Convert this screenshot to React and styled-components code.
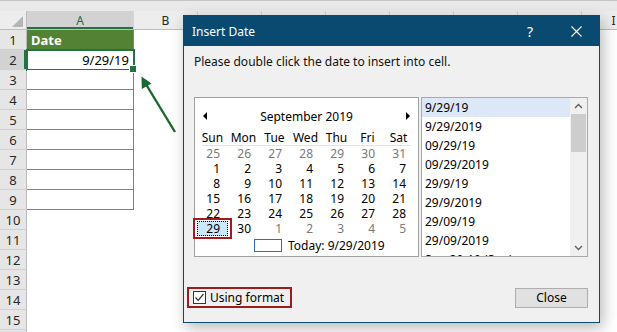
import styled, { createGlobalStyle } from "styled-components";

const GlobalStyle = createGlobalStyle`
  html, body {
    margin: 0;
    padding: 0;
    background: #fff;
  }
  body {
    font-family: "Noto Sans", "DejaVu Sans", sans-serif;
    overflow: hidden;
  }
  * {
    box-sizing: border-box;
  }
`;

const Screen = styled.div`
  position: relative;
  width: 617px;
  height: 332px;
  overflow: hidden;
  background: #fff;
`;

/* ---------- spreadsheet ---------- */

const Sheet = styled.div`
  display: flex;
  flex-direction: column;
`;

const FormulaEdge = styled.div`
  height: 11px;
  background: #e9e9e9;
  border-top: 1px solid #c6c6c6;
`;

const HeaderRow = styled.div`
  display: flex;
  height: 19px;
  background: #ededed;
  border-bottom: 1px solid #bdbdbd;
`;

const Corner = styled.div`
  position: relative;
  flex: 0 0 27px;
  border-right: 1px solid #bdbdbd;
  &::after {
    content: "";
    position: absolute;
    right: 3px;
    bottom: 2px;
    border-left: 11px solid transparent;
    border-bottom: 11px solid #b5b5b5;
  }
`;

const ColHead = styled.div`
  flex: 0 0 ${(p) => p.$w}px;
  display: flex;
  align-items: center;
  justify-content: center;
  border-right: 1px solid #d4d4d4;
  font-size: 12px;
  color: ${(p) => (p.$active ? "#1d6b3e" : "#262626")};
  background: ${(p) => (p.$active ? "#d2d2d2" : "transparent")};
  box-shadow: ${(p) => (p.$active ? "inset 0 -2px 0 #217346" : "none")};
`;

const SheetRow = styled.div`
  display: flex;
  height: 20px;
`;

const RowHead = styled.div`
  flex: 0 0 27px;
  display: flex;
  align-items: center;
  justify-content: center;
  font-size: 13px;
  color: #262626;
  background: ${(p) => (p.$active ? "#d2d2d2" : "#e6e6e6")};
  border-right: 1px solid #bdbdbd;
  border-bottom: 1px solid #d0d0d0;
  box-shadow: ${(p) => (p.$active ? "inset -2px 0 0 #217346" : "none")};
`;

const CellA = styled.div`
  position: relative;
  flex: 0 0 107px;
  display: flex;
  align-items: center;
  padding: 0 4px;
  font-size: 13px;
  justify-content: ${(p) => (p.$right ? "flex-end" : "flex-start")};
  font-weight: ${(p) => (p.$head ? 700 : 400)};
  color: ${(p) => (p.$head ? "#fff" : "#000")};
  background: ${(p) => (p.$head ? "#548235" : "#fff")};
  border-right: 1px solid ${(p) => (p.$framed ? "#808080" : "transparent")};
  border-bottom: 1px solid ${(p) => (p.$framed ? "#808080" : "transparent")};

  ${(p) =>
    p.$selected &&
    `
    &::after {
      content: "";
      position: absolute;
      left: -1px;
      top: -1px;
      right: -2px;
      bottom: -2px;
      border: 2px solid #217346;
    }
    &::before {
      content: "";
      position: absolute;
      right: -4px;
      bottom: -4px;
      width: 6px;
      height: 6px;
      background: #217346;
      border: 1px solid #fff;
      z-index: 1;
    }
  `}
`;

const Blank = styled.div`
  flex: 1;
`;

const Pointer = styled.svg`
  position: absolute;
  left: 130px;
  top: 68px;
`;

/* ---------- dialog ---------- */

const Dialog = styled.div`
  position: absolute;
  left: 183px;
  top: 15px;
  width: 417px;
  display: flex;
  flex-direction: column;
  background: #f0f0f0;
  border: 1px solid #0b4a70;
  box-shadow: 3px 5px 14px rgba(0, 0, 0, 0.28);
  font-size: 12px;
  color: #000;
`;

const TitleBar = styled.div`
  display: flex;
  align-items: center;
  height: 30px;
  padding-left: 8px;
  background: #0b4a70;
  color: #fff;
`;

const Title = styled.div`
  flex: 1;
`;

const TitleButton = styled.div`
  width: 46px;
  height: 30px;
  display: flex;
  align-items: center;
  justify-content: center;
  font-size: 14px;
`;

const Body = styled.div`
  display: flex;
  flex-direction: column;
  padding: 8px 11px 14px 10px;
`;

const Prompt = styled.div`
  line-height: 16px;
  margin-bottom: 27px;
  color: #111;
`;

const Panels = styled.div`
  display: flex;
  gap: 2px;
  height: 160px;
`;

const Calendar = styled.div`
  flex: 0 0 225px;
  display: flex;
  flex-direction: column;
  background: #fff;
  border: 1px solid #a0a0a0;
`;

const CalHeader = styled.div`
  display: flex;
  align-items: center;
  justify-content: space-between;
  height: 16px;
  margin-top: 10px;
  padding: 0 8px 0 8px;
`;

const NavArrow = styled.span`
  width: 0;
  height: 0;
  border-top: 4px solid transparent;
  border-bottom: 4px solid transparent;
  ${(p) =>
    p.$dir === "left"
      ? "border-right: 4px solid #000;"
      : "border-left: 4px solid #000;"}
`;

const DayGrid = styled.div`
  display: grid;
  grid-template-columns: repeat(7, 31px);
  grid-auto-rows: 15px;
  margin-left: 2px;
`;

const DayName = styled.div`
  text-align: center;
  line-height: 15px;
`;

const Divider = styled.div`
  height: 1px;
  margin: 0 7px 0 7px;
  background: #e3e3e3;
`;

const DayCell = styled.div`
  position: relative;
  text-align: right;
  padding-right: 8px;
  line-height: 15px;
  color: ${(p) => (p.$muted ? "#7a7a7a" : "#000")};

  ${(p) =>
    p.$picked &&
    `
    background: #cce8ff;
    outline: 1px dotted #000;
    outline-offset: -1px;
    &::after {
      content: "";
      position: absolute;
      left: -4px;
      right: -4px;
      top: -3px;
      bottom: -3px;
      border: 2px solid #a01c1c;
    }
  `}
`;

const TodayRow = styled.div`
  display: flex;
  align-items: center;
  gap: 6px;
  height: 16px;
  margin-top: 1px;
  padding-left: 59px;
`;

const TodayMark = styled.span`
  width: 28px;
  height: 13px;
  border: 1px solid #2f6fb0;
`;

const ListBox = styled.div`
  flex: 1;
  display: flex;
  background: #fff;
  border: 1px solid #a9a9a9;
  overflow: hidden;
`;

const Items = styled.div`
  flex: 1;
  overflow: hidden;
`;

const Item = styled.div`
  height: 19px;
  line-height: 19px;
  padding-left: 3px;
  white-space: nowrap;
  background: ${(p) => (p.$selected ? "#dce7f8" : "transparent")};
`;

const ScrollBar = styled.div`
  flex: 0 0 17px;
  display: flex;
  flex-direction: column;
  background: #f0f0f0;
`;

const ScrollArrow = styled.div`
  height: 16px;
  display: flex;
  align-items: center;
  justify-content: center;
`;

const Thumb = styled.div`
  height: 38px;
  margin: 0 1px;
  background: #cdcdcd;
`;

const Track = styled.div`
  flex: 1;
`;

const Footer = styled.div`
  display: flex;
  align-items: center;
  justify-content: space-between;
  margin: 30px 0 0 -7px;
`;

const FormatOption = styled.label`
  display: flex;
  align-items: center;
  gap: 4px;
  height: 21px;
  padding: 0 6px 0 4px;
  border: 2px solid #a01c1c;
`;

const CheckBox = styled.span`
  width: 13px;
  height: 13px;
  display: flex;
  align-items: center;
  justify-content: center;
  background: #fff;
  border: 1px solid #333;
`;

const CloseButton = styled.button`
  width: 73px;
  height: 20px;
  padding: 0;
  font-family: inherit;
  font-size: 12px;
  color: #000;
  background: #e1e1e1;
  border: 1px solid #adadad;
`;

const columns = ["B", "C", "D", "E", "F", "G", "H", "I"];

const weeks = [
  [25, 26, 27, 28, 29, 30, 31],
  [1, 2, 3, 4, 5, 6, 7],
  [8, 9, 10, 11, 12, 13, 14],
  [15, 16, 17, 18, 19, 20, 21],
  [22, 23, 24, 25, 26, 27, 28],
  [29, 30, 1, 2, 3, 4, 5],
];

const formats = [
  "9/29/19",
  "9/29/2019",
  "09/29/19",
  "09/29/2019",
  "29/9/19",
  "29/9/2019",
  "29/09/19",
  "29/09/2019",
  "Sep-29-19 (Sun)",
];

function Chevron({ up }) {
  return (
    <svg width="9" height="6" viewBox="0 0 9 6">
      <path
        d={up ? "M1 5 L4.5 1.5 L8 5" : "M1 1 L4.5 4.5 L8 1"}
        fill="none"
        stroke="#606060"
        strokeWidth="1.4"
      />
    </svg>
  );
}

function Spreadsheet() {
  const rows = Array.from({ length: 16 }, (_, i) => i + 1);
  return (
    <Sheet>
      <FormulaEdge />
      <HeaderRow>
        <Corner />
        <ColHead $w={107} $active>
          A
        </ColHead>
        {columns.map((c) => (
          <ColHead key={c} $w={64}>
            {c}
          </ColHead>
        ))}
      </HeaderRow>
      {rows.map((n) => (
        <SheetRow key={n}>
          <RowHead $active={n === 2}>{n}</RowHead>
          {n === 1 && (
            <CellA $framed $head>
              Date
            </CellA>
          )}
          {n === 2 && (
            <CellA $framed $right $selected>
              9/29/19
            </CellA>
          )}
          {n > 2 && <CellA $framed={n <= 9} />}
          <Blank />
        </SheetRow>
      ))}
    </Sheet>
  );
}

function InsertDateDialog() {
  return (
    <Dialog>
      <TitleBar>
        <Title>Insert Date</Title>
        <TitleButton>?</TitleButton>
        <TitleButton>
          <svg width="11" height="11" viewBox="0 0 11 11">
            <path d="M0.5 0.5 L10.5 10.5 M10.5 0.5 L0.5 10.5" stroke="#fff" strokeWidth="1.1" />
          </svg>
        </TitleButton>
      </TitleBar>
      <Body>
        <Prompt>Please double click the date to insert into cell.</Prompt>
        <Panels>
          <Calendar>
            <CalHeader>
              <NavArrow $dir="left" />
              <span>September 2019</span>
              <NavArrow $dir="right" />
            </CalHeader>
            <DayGrid style={{ marginTop: 6 }}>
              {["Sun", "Mon", "Tue", "Wed", "Thu", "Fri", "Sat"].map((d) => (
                <DayName key={d}>{d}</DayName>
              ))}
            </DayGrid>
            <Divider />
            <DayGrid>
              {weeks.map((week, w) =>
                week.map((d, i) => (
                  <DayCell
                    key={`${w}-${i}`}
                    $muted={(w === 0 && d > 20) || (w === 5 && d < 10)}
                    $picked={w === 5 && i === 0}
                  >
                    {d}
                  </DayCell>
                ))
              )}
            </DayGrid>
            <TodayRow>
              <TodayMark />
              <span>Today: 9/29/2019</span>
            </TodayRow>
          </Calendar>
          <ListBox>
            <Items>
              {formats.map((f, i) => (
                <Item key={f} $selected={i === 0}>
                  {f}
                </Item>
              ))}
            </Items>
            <ScrollBar>
              <ScrollArrow>
                <Chevron up />
              </ScrollArrow>
              <Thumb />
              <Track />
              <ScrollArrow>
                <Chevron />
              </ScrollArrow>
            </ScrollBar>
          </ListBox>
        </Panels>
        <Footer>
          <FormatOption>
            <CheckBox>
              <svg width="11" height="11" viewBox="0 0 11 11">
                <path d="M1.5 5.5 L4.2 8.3 L9.5 2" fill="none" stroke="#333" strokeWidth="1.2" />
              </svg>
            </CheckBox>
            <span>Using format</span>
          </FormatOption>
          <CloseButton>Close</CloseButton>
        </Footer>
      </Body>
    </Dialog>
  );
}

export default function App() {
  return (
    <Screen>
      <GlobalStyle />
      <Spreadsheet />
      <Pointer width="60" height="75" viewBox="0 0 60 75">
        <path d="M45 64 L14 13" stroke="#17692f" strokeWidth="2.4" fill="none" />
        <path d="M11.5 8.5 L21.5 15.5 L11.8 21 Z" fill="#17692f" />
      </Pointer>
      <InsertDateDialog />
    </Screen>
  );
}
